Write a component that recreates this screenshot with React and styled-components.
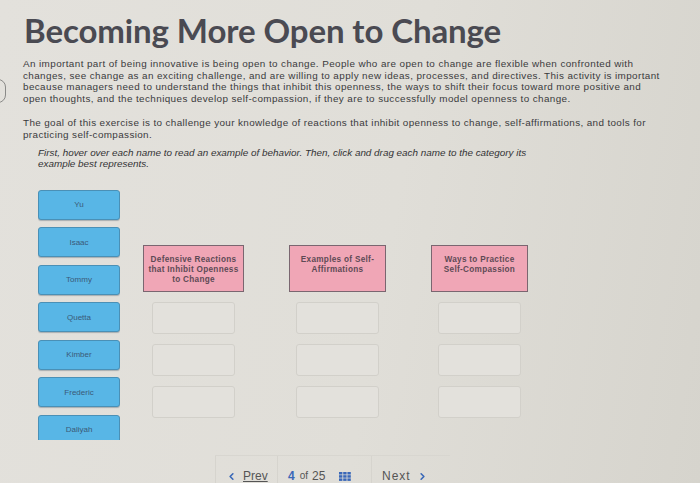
import styled, { createGlobalStyle } from "styled-components";
import { ChevronLeft, ChevronRight } from "lucide-react";

const GlobalStyle = createGlobalStyle`
  html, body {
    margin: 0;
    padding: 0;
    background: #dcdad4;
  }
  body {
    font-family: "Liberation Sans", Arial, sans-serif;
    overflow: hidden;
  }
`;

const names = ["Yu", "Isaac", "Tommy", "Quetta", "Kimber", "Frederic", "Daliyah"];

const categories = [
  { title: "Defensive Reactions\nthat Inhibit Openness\nto Change", width: 101, boxes: 3 },
  { title: "Examples of Self-\nAffirmations", width: 97, boxes: 3 },
  { title: "Ways to Practice\nSelf-Compassion", width: 97, boxes: 3 },
];

export default function App() {
  return (
    <Page>
      <GlobalStyle />
      <SideTab />
      <Title>Becoming More Open to Change</Title>
      <Intro>
        An important part of being innovative is being open to change. People who are open to change are flexible when confronted with<br />
        changes, see change as an exciting challenge, and are willing to apply new ideas, processes, and directives. This activity is important<br />
        because managers need to understand the things that inhibit this openness, the ways to shift their focus toward more positive and<br />
        open thoughts, and the techniques develop self-compassion, if they are to successfully model openness to change.
      </Intro>
      <Goal>
        The goal of this exercise is to challenge your knowledge of reactions that inhibit openness to change, self-affirmations, and tools for<br />
        practicing self-compassion.
      </Goal>
      <Instructions>
        First, hover over each name to read an example of behavior. Then, click and drag each name to the category its<br />
        example best represents.
      </Instructions>

      <Activity>
        <NameList>
          {names.map((n) => (
            <NameCard key={n}>{n}</NameCard>
          ))}
        </NameList>
        <Categories>
          {categories.map((c) => (
            <Category key={c.title}>
              <CategoryHeader $width={c.width}>{c.title}</CategoryHeader>
              {Array.from({ length: c.boxes }).map((_, i) => (
                <DropBox key={i} />
              ))}
            </Category>
          ))}
        </Categories>
      </Activity>

      <Footer>
        <NavItem $width={62}>
          <ChevronLeft size={11} strokeWidth={3.5} color="#3a68b8" />
          <NavLink>Prev</NavLink>
        </NavItem>
        <NavItem $width={94}>
          <PageNum>4</PageNum>
          <PageOf>of</PageOf>
          <PageTotal>25</PageTotal>
          <GridIcon width="12" height="9" viewBox="0 0 12 9">
            {[0, 1, 2].map((r) =>
              [0, 1, 2].map((c) => (
                <rect key={`${r}${c}`} x={c * 4.2} y={r * 3.2} width="3.4" height="2.5" fill="#3a68b8" />
              ))
            )}
          </GridIcon>
        </NavItem>
        <NavItem $width={70}>
          <NavText>Next</NavText>
          <ChevronRight size={11} strokeWidth={3.5} color="#3a68b8" />
        </NavItem>
      </Footer>
    </Page>
  );
}

const Page = styled.div`
  position: relative;
  width: 700px;
  height: 483px;
  box-sizing: border-box;
  padding: 7px 0 0 22px;
  background: linear-gradient(100deg, #e3e1dc 0%, #e0ded8 55%, #d6d4cd 100%);
  overflow: hidden;
  color: #3b3b3d;
`;

const SideTab = styled.div`
  position: absolute;
  left: -10px;
  top: 79px;
  width: 14px;
  height: 22px;
  border: 1px solid #8a8a88;
  border-radius: 8px;
`;

const Title = styled.h1`
  margin: 0 0 0 2px;
  font-family: "Lato", sans-serif;
  font-weight: 700;
  font-size: 33px;
  line-height: 46px;
  color: #4a4a52;
  letter-spacing: -0.1px;
`;

const Intro = styled.p`
  margin: 5px 0 0 1px;
  font-size: 9.9px;
  line-height: 11.7px;
  letter-spacing: 0.4px;
  color: #3a3a3c;
  white-space: nowrap;
`;

const Goal = styled.p`
  margin: 12px 0 0 1px;
  font-size: 9.9px;
  line-height: 12.4px;
  letter-spacing: 0.37px;
  color: #3a3a3c;
  white-space: nowrap;
`;

const Instructions = styled.p`
  margin: 5px 0 0 16px;
  font-size: 9.9px;
  line-height: 11px;
  font-style: italic;
  color: #333335;
  white-space: nowrap;
`;

const Activity = styled.div`
  display: flex;
  margin: 21px 0 0 16px;
  height: 250px;
`;

const NameList = styled.div`
  display: flex;
  flex-direction: column;
  gap: 7.5px;
  width: 82px;
  height: 250px;
  overflow: hidden;
`;

const NameCard = styled.div`
  flex: none;
  height: 30px;
  box-sizing: border-box;
  display: flex;
  align-items: center;
  justify-content: center;
  background: #58b6e6;
  border: 1px solid #4a90b6;
  border-radius: 3px;
  box-shadow: 0 1px 1px rgba(60, 80, 100, 0.35);
  font-size: 8px;
  color: #3b5a78;
`;

const Categories = styled.div`
  display: flex;
  gap: 45px;
  margin-left: 23px;
  padding-top: 55px;
  align-items: flex-start;
`;

const Category = styled.div`
  display: flex;
  flex-direction: column;
  align-items: center;
  gap: 10px;
`;

const CategoryHeader = styled.div`
  width: ${(p) => p.$width}px;
  height: 47px;
  box-sizing: border-box;
  padding: 9px 0 0;
  background: #f0a6b6;
  border: 1.5px solid #7a6670;
  font-weight: 700;
  font-size: 8.2px;
  line-height: 10px;
  letter-spacing: 0.3px;
  white-space: pre-line;
  text-align: center;
  color: #5e4a55;
`;

const DropBox = styled.div`
  width: 83px;
  height: 32px;
  box-sizing: border-box;
  border: 1px solid #d2d0ca;
  border-radius: 3px;
  background: #e3e1dc;
`;

const Footer = styled.div`
  display: flex;
  margin: 15px 0 0 193px;
  width: 235px;
  border-top: 1px solid #d8d6d0;
`;

const NavItem = styled.div`
  width: ${(p) => p.$width}px;
  height: 28px;
  box-sizing: border-box;
  display: flex;
  align-items: center;
  gap: 6px;
  padding: 13px 0 0 10px;
  border-left: 1px solid #d6d4ce;
  font-size: 12px;
  line-height: 14px;
  color: #555;
`;

const NavLink = styled.span`
  text-decoration: underline;
  color: #555;
`;

const NavText = styled.span`
  letter-spacing: 1px;
  color: #555;
`;

const PageNum = styled.span`
  font-weight: 700;
  color: #3a68b8;
`;

const PageOf = styled.span`
  font-size: 10px;
  margin-left: -1px;
`;

const PageTotal = styled.span`
  margin-left: -2px;
`;

const GridIcon = styled.svg`
  margin-left: 8px;
`;
